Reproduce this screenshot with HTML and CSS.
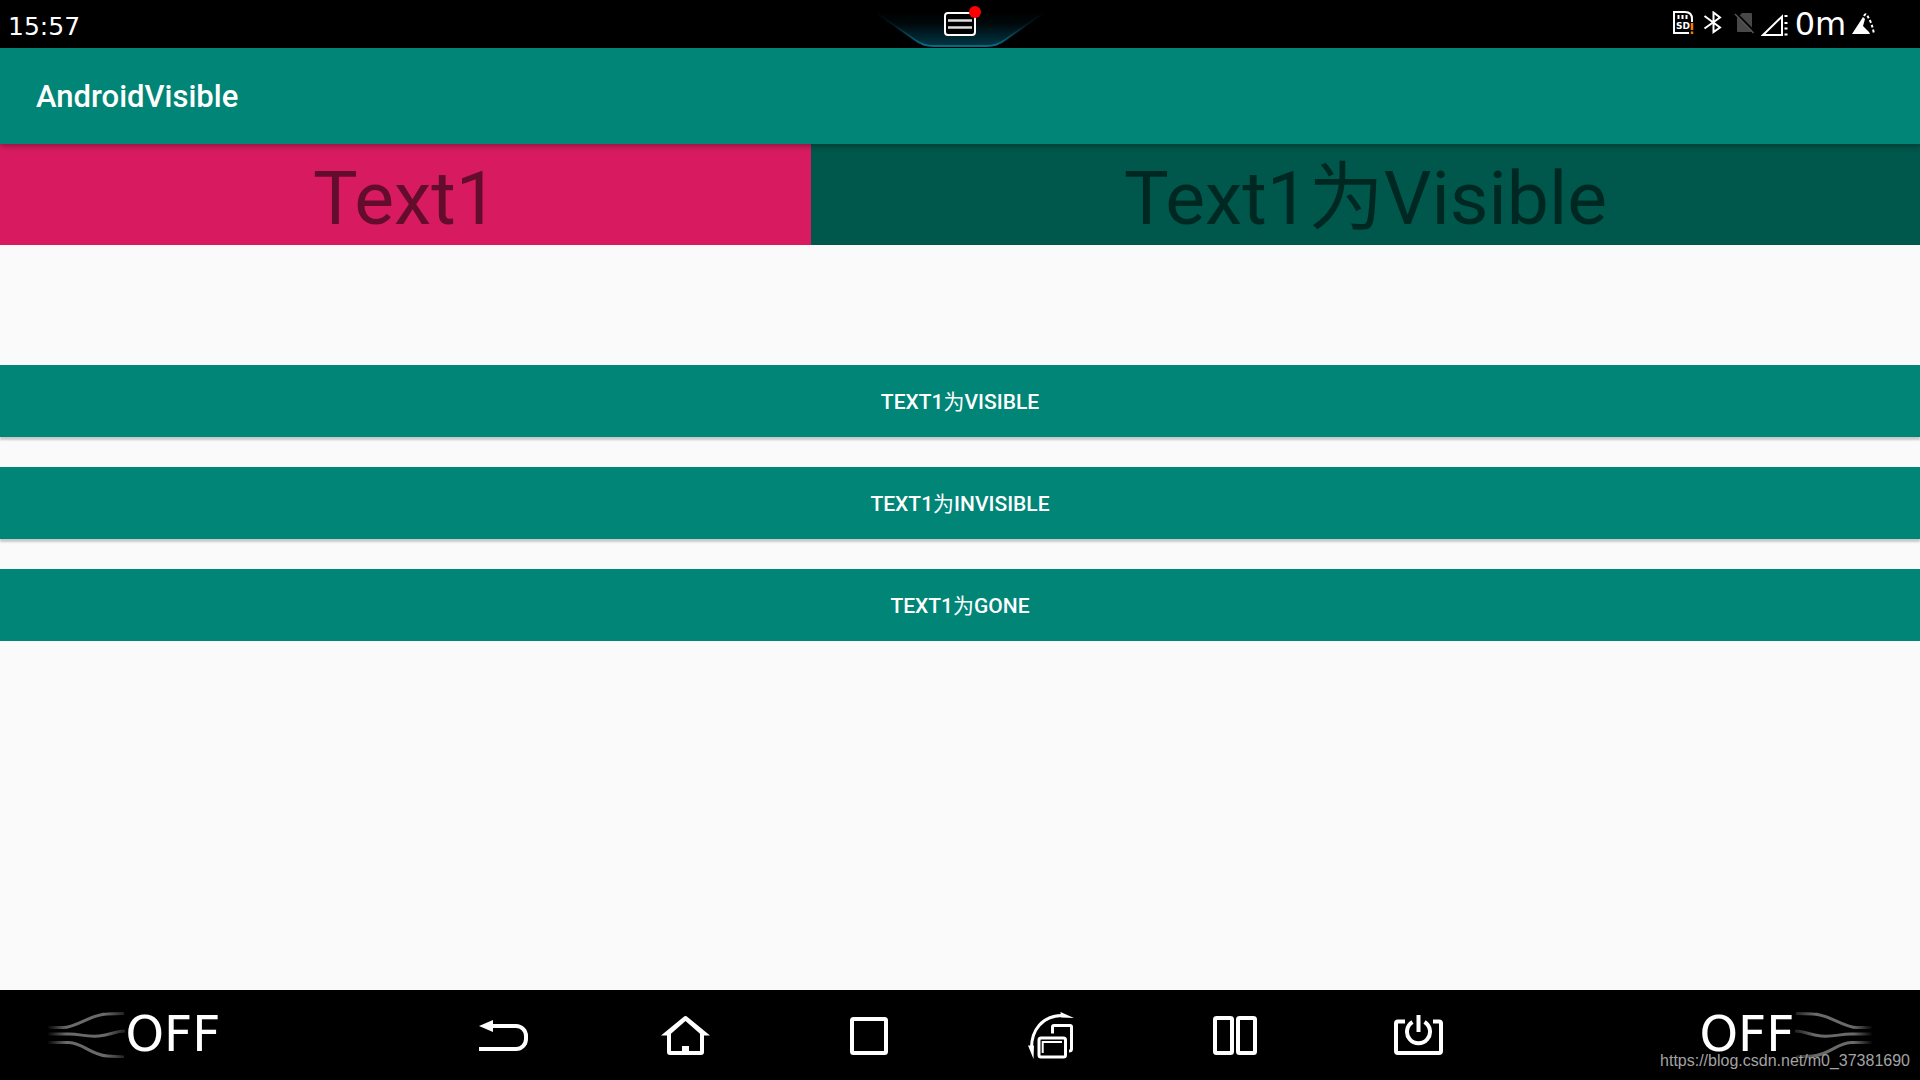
FILE: index.html
```html
<!DOCTYPE html>
<html lang="zh-CN">
<head>
<meta charset="utf-8">
<meta name="viewport" content="width=device-width, initial-scale=1">
<title>AndroidVisible</title>
<link rel="stylesheet" href="styles.css">
</head>
<body>
<div class="screen">
  <header class="status">
    <time class="clock">15:57</time>
    <button class="notifications" aria-label="Notifications">
      <svg width="200" height="48" viewBox="0 0 200 48" fill="none">
        <defs>
          <linearGradient id="glow" x1="0" y1="0" x2="0" y2="1">
            <stop offset="0" stop-color="#003a48" stop-opacity="0"/>
            <stop offset=".35" stop-color="#003a48" stop-opacity=".15"/>
            <stop offset="1" stop-color="#003644"/>
          </linearGradient>
          <linearGradient id="edge" gradientUnits="userSpaceOnUse" x1="15" y1="0" x2="185" y2="0">
            <stop offset="0" stop-color="#0a6d86" stop-opacity="0"/>
            <stop offset=".12" stop-color="#0a6d86" stop-opacity=".2"/>
            <stop offset=".3" stop-color="#0a6d86"/>
            <stop offset=".7" stop-color="#0a6d86"/>
            <stop offset=".88" stop-color="#0a6d86" stop-opacity=".2"/>
            <stop offset="1" stop-color="#0a6d86" stop-opacity="0"/>
          </linearGradient>
        </defs>
        <path d="M15 12L55 40Q63 46 73 46H127Q137 46 145 40L185 12Z" fill="url(#glow)"/>
        <path d="M15 12L55 40Q63 46 73 46H127Q137 46 145 40L185 12" stroke="url(#edge)" stroke-width="2"/>
        <rect x="85" y="13" width="30" height="22" rx="3" fill="#000" stroke="#fff" stroke-width="2"/>
        <path d="M88 20.500H112M88 27.500H112" stroke="#ddd" stroke-width="2.500"/>
        <circle cx="115" cy="12" r="6" fill="#f00"/>
      </svg>
    </button>
    <div class="indicators">
      <svg width="26" height="26" viewBox="0 0 26 26" fill="none" stroke="#fff">
        <path d="M22 11V8Q22 1 15 1H4V22H19" stroke-width="2"/>
        <path d="M8.500 4V8M12.500 4V8M16.500 4V8" stroke-width="2"/>
        <text x="6" y="18" class="sd">SD</text>
        <path d="M22 12V19M22 20.500V23" stroke="#f57c00" stroke-width="2.500"/>
      </svg>
      <svg width="26" height="26" viewBox="0 0 26 26" fill="none" stroke="#fff" stroke-width="2">
        <path d="M4.500 5L20 16.500L13.500 21V1.500L20 6.500L4.500 17.500"/>
      </svg>
      <svg width="27" height="26" viewBox="0 0 27 26">
        <path d="M12 2H21Q22 2 22 3V20Q22 21 21 21H8Q7 21 7 20V7Z" fill="#484848"/>
        <path d="M6 2L24 20" stroke="#000" stroke-width="2"/>
        <path d="M5 3L23.500 22" stroke="#555" stroke-width="1.500"/>
      </svg>
      <svg width="28" height="26" viewBox="0 0 28 26" fill="none" stroke="#fff" stroke-width="2">
        <path d="M2 24L21 5.500V24Z"/>
        <path d="M23.500 5H26.500M23.500 12H26.500M23.500 17.500H26.500M23.500 23.500H26.500"/>
      </svg>
      <span class="distance">0m</span>
      <svg width="24" height="26" viewBox="0 0 24 26" fill="#fff">
        <path d="M0 23L11 6L13 8L11 15L17 21L18 23Z"/>
        <path d="M12 5Q14 1 16 6Q20 12 22 23" fill="none" stroke="#fff" stroke-width="2" stroke-dasharray="3 2"/>
      </svg>
    </div>
  </header>

  <div class="appbar"><h1 class="title">AndroidVisible</h1></div>

  <main class="content">
    <div class="labels">
      <div class="label label-pink">Text1</div>
      <div class="label label-dark">Text1为Visible</div>
    </div>
    <div class="actions">
      <button class="action">Text1<span class="han">为</span>Visible</button>
      <button class="action">Text1<span class="han">为</span>Invisible</button>
      <button class="action action-flat">Text1<span class="han">为</span>Gone</button>
    </div>
  </main>

  <nav class="navbar">
    <button class="fan">
      <svg width="78" height="46" viewBox="0 0 78 46" fill="none" stroke="url(#fade)" stroke-width="3" aria-hidden="true">
        <defs>
          <linearGradient id="fade" gradientUnits="userSpaceOnUse" x1="0" y1="0" x2="78" y2="0">
            <stop offset="0" stop-color="#6a6a6a" stop-opacity="0"/>
            <stop offset=".25" stop-color="#6a6a6a"/>
            <stop offset=".75" stop-color="#6a6a6a"/>
            <stop offset="1" stop-color="#6a6a6a" stop-opacity=".3"/>
          </linearGradient>
        </defs>
        <path d="M0 15.500H16C30 15.500 44 2 60 2L77 1.500"/>
        <path d="M0 22H22C34 22 38 25 52 24C64 23 68 19 78 19"/>
        <path d="M0 30.500H22C36 31 44 43 60 44L77 45"/>
      </svg>
      <span class="fan-text">OFF</span>
    </button>
    <div class="keys">
      <button class="key" aria-label="Back">
        <svg width="50" height="50" viewBox="0 0 50 50" fill="none" stroke="#fff" stroke-width="4">
          <path d="M14 16H38A10 10 0 0 1 48 26V29A10 10 0 0 1 38 39H1"/>
          <path d="M1 16L15 10V22Z" fill="#fff" stroke="none"/>
        </svg>
      </button>
      <button class="key" aria-label="Home">
        <svg width="50" height="50" viewBox="0 0 50 50" fill="none" stroke="#fff" stroke-width="4">
          <path d="M8 23V42Q8 43 9 43H40Q41 43 41 42V23" />
          <path d="M0 25.500L22.500 7Q24.500 5 26.500 7L49 25.500H41L24.500 11L8 25.500Z" fill="#fff" stroke="none"/>
          <path d="M21 36H28V43H21Z" fill="#fff" stroke="none"/>
        </svg>
      </button>
      <button class="key" aria-label="Recent apps">
        <svg width="50" height="50" viewBox="0 0 50 50" fill="none" stroke="#fff" stroke-width="4">
          <rect x="8" y="9" width="34" height="34" rx="1.500"/>
        </svg>
      </button>
      <button class="key" aria-label="Rotate screen">
        <svg width="50" height="50" viewBox="0 0 50 50" fill="none" stroke="#fff" stroke-width="3">
          <path d="M4.500 38C4.500 20 15 6 35 5.500"/>
          <path d="M33.500 2L47 8L34 7.500ZM1 35.500H7L6.500 49Z" fill="#fff" stroke="none"/>
          <path d="M25.500 23.500V17Q25.500 15.500 27 15.500H43Q44.500 15.500 44.500 17V39Q44.500 41 42 41"/>
          <rect x="12" y="28" width="26.500" height="19" rx="2"/>
          <path d="M15.700 43V32H35" stroke-width="2"/>
        </svg>
      </button>
      <button class="key" aria-label="Split screen">
        <svg width="50" height="50" viewBox="0 0 50 50" fill="none" stroke="#fff" stroke-width="4">
          <rect x="5" y="8" width="17" height="35" rx="1.500"/>
          <rect x="28" y="8" width="17" height="35" rx="1.500"/>
        </svg>
      </button>
      <button class="key" aria-label="Screen off">
        <svg width="50" height="50" viewBox="0 0 50 50" fill="none" stroke="#fff" stroke-width="4">
          <path d="M12 11.500H5Q3 11.500 3 13.500V41Q3 43 5 43H46Q48 43 48 41V13.500Q48 11.500 46 11.500H40"/>
          <path d="M19.500 12A11.500 11.500 0 1 0 31.500 12M25.500 5V22"/>
        </svg>
      </button>
    </div>
    <button class="fan">
      <span class="fan-text">OFF</span>
      <svg width="78" height="46" viewBox="0 0 78 46" fill="none" stroke="url(#fade)" stroke-width="3" aria-hidden="true">
        <g transform="matrix(-1 0 0 1 78 0)">
          <path d="M0 15.500H16C30 15.500 44 2 60 2L77 1.500"/>
          <path d="M0 22H22C34 22 38 25 52 24C64 23 68 19 78 19"/>
          <path d="M0 30.500H22C36 31 44 43 60 44L77 45"/>
        </g>
      </svg>
    </button>
    <a class="watermark" href="https://blog.csdn.net/m0_37381690">https://blog.csdn.net/m0_37381690</a>
  </nav>
</div>
</body>
</html>
```
FILE: styles.css
```css
* {
  box-sizing: border-box;
}

body {
  margin: 0;
  background: #fafafa;
  font-family: Roboto, "Noto Sans CJK SC", sans-serif;
}

button {
  margin: 0;
  padding: 0;
  border: 0;
  background: none;
  color: #fff;
  font: inherit;
  cursor: pointer;
}

svg {
  display: block;
}

.screen {
  display: flex;
  flex-direction: column;
  min-height: 100vh;
}

.status {
  display: grid;
  grid-template-columns: 1fr auto 1fr;
  align-items: center;
  height: 48px;
  background: #000;
  color: #fff;
  font-family: "DejaVu Sans", sans-serif;
}

.clock {
  padding: 6px 0 0 8px;
  font-size: 25px;
  line-height: 28px;
}

.indicators {
  display: flex;
  align-items: center;
  justify-content: flex-end;
  gap: 4px;
  padding-right: 44px;
}

.sd {
  fill: #fff;
  stroke: none;
  font: bold 9px "DejaVu Sans", sans-serif;
}

.distance {
  width: 55px;
  font-size: 32px;
  line-height: 32px;
  text-align: center;
}

.appbar {
  position: relative;
  display: flex;
  align-items: center;
  height: 96px;
  padding: 2px 36px 0;
  background: #008577;
  box-shadow: 0 2px 6px rgba(0, 0, 0, 0.35);
}

.title {
  margin: 0;
  color: #fff;
  font-size: 31px;
  font-weight: 500;
  line-height: 36px;
}

.content {
  flex: 1;
}

.labels {
  display: flex;
}

.label {
  flex: 1 1 auto;
  height: 101px;
  color: rgba(0, 0, 0, 0.54);
  font-size: 75px;
  line-height: 108px;
  text-align: center;
}

.label-pink {
  background: #d81b60;
}

.label-dark {
  background: #00574b;
}

.actions {
  display: flex;
  flex-direction: column;
  gap: 30px;
  padding: 120px 0 30px;
}

.action {
  height: 72px;
  padding-top: 2px;
  background: #008577;
  box-shadow: 0 3px 2px rgba(0, 0, 0, 0.2);
  font-size: 21px;
  font-weight: 500;
  line-height: 28px;
  text-transform: uppercase;
}

.action-flat {
  box-shadow: none;
}

.han {
  font-weight: 400;
}

.navbar {
  position: relative;
  display: flex;
  align-items: center;
  justify-content: space-between;
  height: 90px;
  padding: 0 47px;
  background: #000;
}

.fan {
  display: flex;
  align-items: center;
}

.fan-text {
  width: 96px;
  font-family: "DejaVu Sans", sans-serif;
  font-size: 49px;
  line-height: 48px;
  text-align: center;
}

.keys {
  display: flex;
  padding-left: 1px;
}

.key {
  display: flex;
  justify-content: center;
  width: 183px;
}

.watermark {
  position: absolute;
  right: 10px;
  bottom: 9px;
  color: #a3a3a3;
  font-family: "Liberation Sans", sans-serif;
  font-size: 16px;
  line-height: 20px;
  text-decoration: none;
}
```
